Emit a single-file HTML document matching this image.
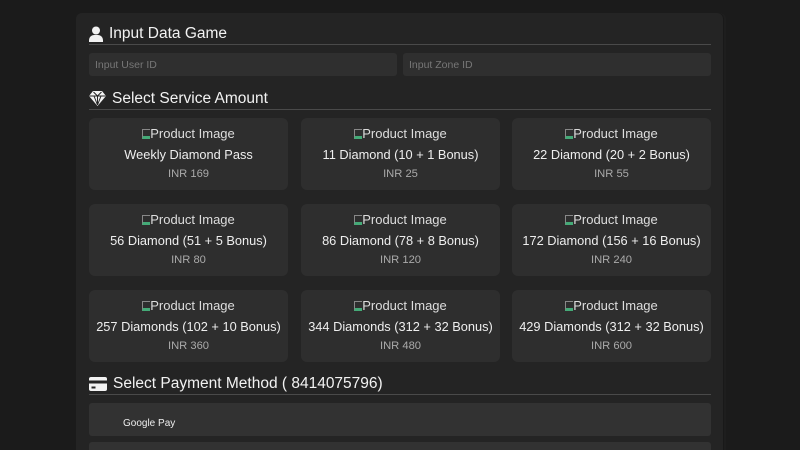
<!DOCTYPE html>
<html><head><style>
*{box-sizing:border-box;margin:0;padding:0}
html,body{width:800px;height:450px;overflow:hidden}
body{background:#1b1b1b;font-family:"Liberation Sans",Arial,sans-serif;color:#eee}
.c{position:absolute;left:76px;top:13px;width:647px;height:437px;background:#242424;border-radius:6px 6px 0 0;box-shadow:1px 0 0 #191919,3px 0 0 #1e1e1e;overflow:hidden}
.h{position:absolute;left:13px;width:622px;height:23px;border-bottom:1px solid #4a4a4a;font-size:15.5px;color:#f2f2f2;display:flex;align-items:center;padding-top:1px}
.h svg{margin-right:6px}
.in{position:absolute;top:40px;height:23px;background:#2f2f2f;border-radius:3px;font-size:10.5px;color:#777;padding:6px 6px}
.card{position:absolute;width:199px;height:72px;background:#2e2e2e;border-radius:6px;text-align:center}
.card .i{position:absolute;top:8px;left:0;right:0;font-size:13px;color:#ddd}
.card .i b{display:inline-block;width:8px;height:10px;border-top:1px solid #888;border-left:1px solid #888;border-bottom:3px solid #4a7;vertical-align:-1px;font-weight:normal}
.card .n{position:absolute;top:29px;left:0;right:0;font-size:12.8px;color:#eee}
.card .p{position:absolute;top:50px;left:0;right:0;font-size:11.2px;color:#aaa}
.pay{position:absolute;left:13px;width:622px;height:33px;background:#323232;border-radius:3px;font-size:10px;color:#eee}
</style></head><body>
<div class="c">
<div class="h" style="top:9px"><svg width="14" height="16" viewBox="0 0 14 16"><circle cx="7" cy="4.5" r="4" fill="#f2f2f2"/><path d="M0 16v-2a5 5 0 0 1 5-5h4a5 5 0 0 1 5 5v2z" fill="#f2f2f2"/></svg>Input Data Game</div>
<div class="in" style="left:13px;width:308px">Input User ID</div>
<div class="in" style="left:327px;width:308px">Input Zone ID</div>
<div class="h" style="top:74px"><svg width="17" height="15" viewBox="0 0 17 15"><path d="M4 0h9l4 5-8.5 10L0 5z" fill="#f2f2f2"/><path d="M4.5 1L8.5 5 12.5 1M0.5 5h16M8.5 5v9M5 5l3.5 9M12 5l-3.5 9" stroke="#242424" stroke-width="1" fill="none"/></svg>Select Service Amount</div>
<div class="card" style="left:13px;top:105px"><div class="i"><b></b>Product Image</div><div class="n">Weekly Diamond Pass</div><div class="p">INR 169</div></div>
<div class="card" style="left:225px;top:105px"><div class="i"><b></b>Product Image</div><div class="n">11 Diamond (10 + 1 Bonus)</div><div class="p">INR 25</div></div>
<div class="card" style="left:436px;top:105px"><div class="i"><b></b>Product Image</div><div class="n">22 Diamond (20 + 2 Bonus)</div><div class="p">INR 55</div></div>
<div class="card" style="left:13px;top:191px"><div class="i"><b></b>Product Image</div><div class="n">56 Diamond (51 + 5 Bonus)</div><div class="p">INR 80</div></div>
<div class="card" style="left:225px;top:191px"><div class="i"><b></b>Product Image</div><div class="n">86 Diamond (78 + 8 Bonus)</div><div class="p">INR 120</div></div>
<div class="card" style="left:436px;top:191px"><div class="i"><b></b>Product Image</div><div class="n">172 Diamond (156 + 16 Bonus)</div><div class="p">INR 240</div></div>
<div class="card" style="left:13px;top:277px"><div class="i"><b></b>Product Image</div><div class="n">257 Diamonds (102 + 10 Bonus)</div><div class="p">INR 360</div></div>
<div class="card" style="left:225px;top:277px"><div class="i"><b></b>Product Image</div><div class="n">344 Diamonds (312 + 32 Bonus)</div><div class="p">INR 480</div></div>
<div class="card" style="left:436px;top:277px"><div class="i"><b></b>Product Image</div><div class="n">429 Diamonds (312 + 32 Bonus)</div><div class="p">INR 600</div></div>
<div class="h" style="top:359px"><svg width="18" height="14" viewBox="0 0 18 14"><rect x="0" y="0" width="18" height="14" rx="2" fill="#f2f2f2"/><rect x="0" y="3.5" width="18" height="3" fill="#242424"/><rect x="2.5" y="9.5" width="4" height="2" fill="#242424"/></svg>Select Payment Method ( 8414075796)</div>
<div class="pay" style="top:390px"><span style="position:absolute;left:34px;top:15px">Google Pay</span></div>
<div class="pay" style="top:429px;height:8px;border-radius:3px 3px 0 0"></div>
</div>
</body></html>
